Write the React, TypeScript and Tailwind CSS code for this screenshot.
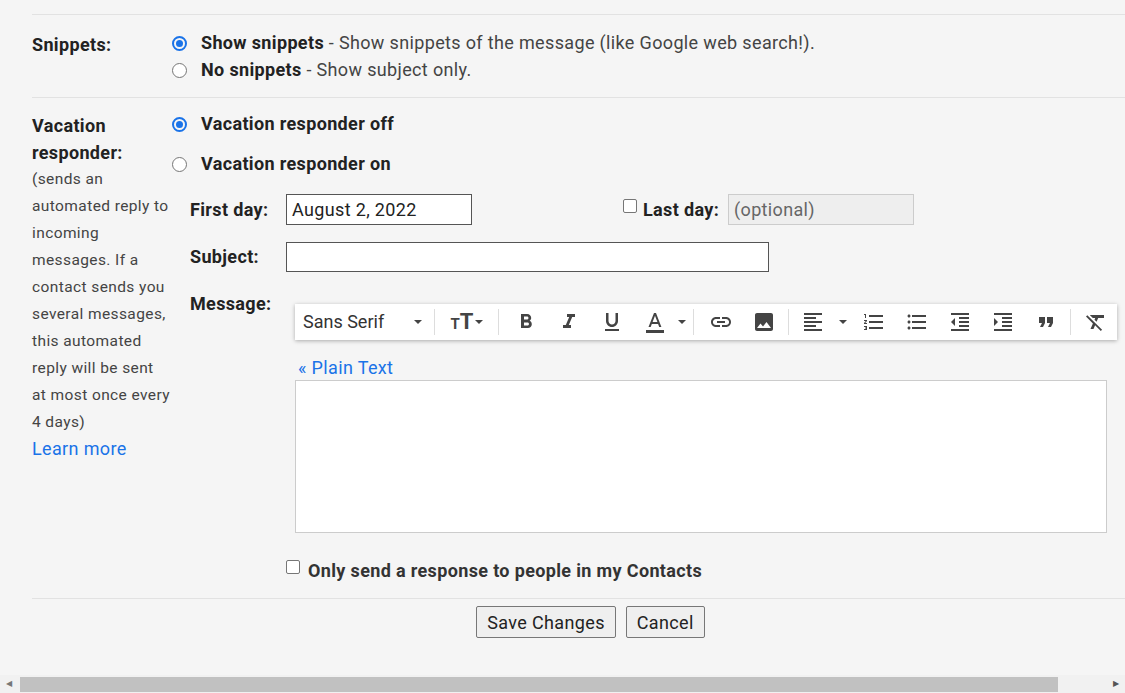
import React from "react";

const Radio = ({ on }: { on?: boolean }) => (
  <span className={`inline-block w-[15px] h-[15px] rounded-full border ${on ? "border-[#1a73e8] border-2 p-[2px]" : "border-[#767676] bg-white"} box-border shrink-0`}>
    {on && <span className="block w-full h-full rounded-full bg-[#1a73e8]" />}
  </span>
);
const Check = () => <span className="inline-block w-[14px] h-[14px] border border-[#767676] rounded-[2px] bg-white shrink-0" />;

const I = ({ children }: { children: React.ReactNode }) => (
  <span className="w-[43px] flex justify-center shrink-0">
    <svg width={24} height={24} viewBox="0 0 24 24" fill="#444">{children}</svg>
  </span>
);
const Caret = ({ w = 16 }: { w?: number }) => (
  <span className="flex justify-center shrink-0" style={{ width: w }}>
    <svg width="10" height="10" viewBox="0 0 10 10"><path d="M1 3h8L5 7z" fill="#444" /></svg>
  </span>
);
const Sep = ({ w }: { w: number }) => (
  <span className="flex justify-center shrink-0" style={{ width: w }}><span className="w-px h-[26px] bg-[#ddd]" /></span>
);

export default function App() {
  return (
    <div className="w-[1125px] h-[693px] bg-[#f5f5f5] relative overflow-hidden text-[#222] text-[18px] tracking-[0.35px]" style={{ fontFamily: "Roboto, 'Liberation Sans', sans-serif" }}>
      <div className="pl-[32px]">
        <div className="h-[15px] border-b border-[#e2e2e2]" />
        <div className="flex pt-[16px] pb-[15px] border-b border-[#e2e2e2]">
          <div className="w-[140px] font-bold">Snippets:</div>
          <div className="flex flex-col gap-[3px] leading-[24px]">
            <div className="flex items-center gap-[14px]"><Radio on /><span><b>Show snippets</b> <span className="text-[#444]">- Show snippets of the message (like Google web search!).</span></span></div>
            <div className="flex items-center gap-[14px]"><Radio /><span><b>No snippets</b> <span className="text-[#444]">- Show subject only.</span></span></div>
          </div>
        </div>
        <div className="flex pt-[14px] pb-[15px] border-b border-[#e2e2e2]">
          <div className="w-[140px] shrink-0">
            <div className="font-bold leading-[27px]">Vacation<br />responder:</div>
            <div className="text-[15.5px] leading-[27px] text-[#444] tracking-[0.4px]">(sends an automated reply to incoming messages. If a contact sends you several messages, this automated reply will be sent at most once every 4 days)</div>
            <div className="text-[#1a73e8] leading-[26px]">Learn more</div>
          </div>
          <div className="flex-1 leading-[24px]">
            <div className="flex items-center gap-[14px] font-bold"><Radio on />Vacation responder off</div>
            <div className="flex items-center gap-[14px] font-bold mt-[16px]"><Radio />Vacation responder on</div>
            <div className="ml-[18px] mt-[18px] flex items-center">
              <span className="w-[96px] font-bold">First day:</span>
              <div className="w-[186px] h-[31px] border border-[#555] bg-white px-[5px] flex items-center">August 2, 2022</div>
              <div className="ml-[151px] w-[105px] flex items-center gap-[6px] font-bold"><span className="-mt-[6px]"><Check /></span>Last day:</div>
              <div className="w-[186px] h-[31px] border border-[#ccc] bg-[#eeeeee] px-[5px] flex items-center text-[#666]">(optional)</div>
            </div>
            <div className="ml-[18px] mt-[17px] flex items-center">
              <span className="w-[96px] font-bold">Subject:</span>
              <div className="w-[483px] h-[30px] border border-[#555] bg-white" />
            </div>
            <div className="ml-[18px] mt-[20px] flex">
              <span className="w-[105px] font-bold shrink-0">Message:</span>
              <div className="flex-1 mt-[12px] mr-[8px]">
                <div className="h-[36px] bg-white shadow-[0_1px_4px_rgba(0,0,0,0.3)] flex items-center pl-[8px] text-[#333] tracking-normal">
                  <span className="w-[107px] shrink-0">Sans Serif</span><Caret />
                  <Sep w={17} />
                  <span className="w-[50px] flex items-center justify-center shrink-0">
                    <span className="font-bold text-[22px] leading-none text-[#444]"><span className="text-[15px]">T</span>T</span><Caret w={12} />
                  </span>
                  <Sep w={11} />
                  <I><path d="M15.6 10.8c1-.7 1.6-1.8 1.6-2.8 0-2.3-1.7-4-4-4H7v14h7c2.1 0 3.8-1.7 3.8-3.8 0-1.5-.9-2.8-2.2-3.4zM10 6.5h3c.8 0 1.5.7 1.5 1.5s-.7 1.5-1.5 1.5h-3v-3zm3.5 9H10v-3h3.5c.8 0 1.5.7 1.5 1.5s-.7 1.5-1.5 1.5z" /></I>
                  <I><path d="M10 4v3h2.2l-3.4 8H6v3h8v-3h-2.2l3.4-8H18V4z" /></I>
                  <I><path d="M12 17c3.3 0 6-2.7 6-6V3h-2.5v8c0 1.9-1.6 3.5-3.5 3.5S8.5 12.9 8.5 11V3H6v8c0 3.3 2.7 6 6 6zm-7 2v2h14v-2H5z" /></I>
                  <I><path d="M11 3L5.5 17h2.2l1.1-3h6.3l1.1 3h2.2L13 3h-2zm-1.4 9L12 5.7 14.4 12H9.6zM3 20h18v3H3z" /></I>
                  <Caret w={12} />
                  <Sep w={11} />
                  <I><path d="M3.9 12c0-1.7 1.4-3.1 3.1-3.1h4V7H7c-2.8 0-5 2.2-5 5s2.2 5 5 5h4v-1.9H7c-1.7 0-3.1-1.4-3.1-3.1zM8 13h8v-2H8v2zm9-6h-4v1.9h4c1.7 0 3.1 1.4 3.1 3.1s-1.4 3.1-3.1 3.1h-4V17h4c2.8 0 5-2.2 5-5s-2.2-5-5-5z" /></I>
                  <I><path d="M21 19V5c0-1.1-.9-2-2-2H5c-1.1 0-2 .9-2 2v14c0 1.1.9 2 2 2h14c1.1 0 2-.9 2-2zM8.5 13.5l2.5 3 3.5-4.5 4.5 6H5l3.5-4.5z" /></I>
                  <Sep w={6} />
                  <I><path d="M3 3h18v2H3zm0 4h12v2H3zm0 4h18v2H3zm0 4h12v2H3zm0 4h18v2H3z" /></I>
                  <Caret w={18} />
                  <I><path d="M2 17h2v.5H3v1h1v.5H2v1h3v-4H2v1zm1-9h1V4H2v1h1v3zm-1 3h1.8L2 13.1v.9h3v-1H3.2L5 10.9V10H2v1zm5-6v2h14V5H7zm0 14h14v-2H7v2zm0-6h14v-2H7v2z" /></I>
                  <I><path d="M4 10.5c-.8 0-1.5.7-1.5 1.5s.7 1.5 1.5 1.5 1.5-.7 1.5-1.5-.7-1.5-1.5-1.5zm0-6c-.8 0-1.5.7-1.5 1.5S3.2 7.5 4 7.5 5.5 6.8 5.5 6 4.8 4.5 4 4.5zm0 12c-.8 0-1.5.7-1.5 1.5s.7 1.5 1.5 1.5 1.5-.7 1.5-1.5-.7-1.5-1.5-1.5zM7 19h14v-2H7v2zm0-6h14v-2H7v2zm0-8v2h14V5H7z" /></I>
                  <I><path d="M11 17h10v-2H11v2zm-8-5l4 4V8l-4 4zm0 9h18v-2H3v2zM3 3v2h18V3H3zm8 6h10V7H11v2zm0 4h10v-2H11v2z" /></I>
                  <I><path d="M3 21h18v-2H3v2zM3 8v8l4-4-4-4zm8 9h10v-2H11v2zM3 3v2h18V3H3zm8 6h10V7H11v2zm0 4h10v-2H11v2z" /></I>
                  <I><path d="M6 17h3l2-4V7H5v6h3zm8 0h3l2-4V7h-6v6h3z" /></I>
                  <Sep w={7} />
                  <I><path d="M3.3 5.3 2 6.6l6.9 6.9L6.5 19h3l1.6-3.7 5.7 5.7 1.3-1.3L3.3 5.3zM6 5v.2L8.8 8h2.4l-.7 1.7 2.1 2.1L14.2 8H20V5H6z" /></I>
                </div>
                <div className="mt-[18px] ml-[3px] text-[#1a73e8] leading-[20px]">« Plain Text</div>
                <div className="mt-[2px] h-[153px] border border-[#ccc] bg-white mr-[10px]" />
              </div>
            </div>
            <div className="ml-[114px] mt-[26px] flex items-center gap-[8px] font-bold text-[#333]"><span className="-mt-[6px]"><Check /></span>Only send a response to people in my Contacts</div>
          </div>
        </div>
        <div className="flex justify-center gap-[10px] pt-[7px] pl-[24px]">
          <button className="h-[32px] px-[10px] border border-[#777] bg-[#efefef] rounded-[2px] text-[#222]">Save Changes</button>
          <button className="h-[32px] px-[10px] border border-[#777] bg-[#efefef] rounded-[2px] text-[#222]">Cancel</button>
        </div>
      </div>
      <div className="absolute bottom-0 left-0 right-0 h-[18px] bg-[#f1f1f1] flex items-center">
        <span className="w-[18px] text-center text-[8px] text-[#777]">◀</span>
        <div className="h-[15px] w-[1038px] bg-[#c1c1c1] ml-[2px]" />
        <div className="flex-1" />
        <span className="w-[18px] text-center text-[8px] text-[#555]">▶</span>
      </div>
    </div>
  );
}
